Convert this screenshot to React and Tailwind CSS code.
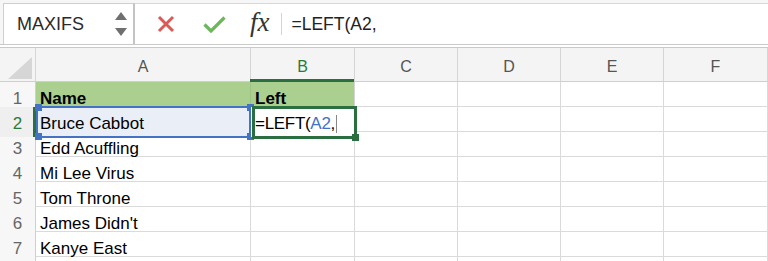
import React from 'react'

const cols = ['A', 'B', 'C', 'D', 'E', 'F']
const names = ['Edd Acuffling', 'Mi Lee Virus', 'Tom Throne', "James Didn't", 'Kanye East']

function Corner({ className }) {
  return <span className={`absolute w-[7px] h-[7px] ${className}`} />
}

export default function App() {
  const gridCols = 'grid grid-cols-[36px_215px_104px_103px_103px_103px_104px]'

  return (
    <div className="w-[768px] h-[261px] overflow-hidden bg-white text-[#222]" style={{ fontFamily: '"Liberation Sans", Arial, sans-serif' }}>
      {/* formula bar */}
      <div className="flex h-[44px] bg-[#f6f6f6] pt-[3px] pl-[3px]">
        <div className="flex items-center w-[132px] h-[41px] bg-white border-t border-l border-[#cfcfcf] border-r-2 border-r-[#c4c4c4]">
          <span className="ml-[13px] text-[18px] text-[#2a2a2a]">MAXIFS</span>
          <div className="ml-auto mr-[6px] flex flex-col gap-[8px]">
            <svg width="12" height="8" viewBox="0 0 12 8"><path d="M6 0 L12 8 L0 8 Z" fill="#6f6f6f" /></svg>
            <svg width="12" height="8" viewBox="0 0 12 8"><path d="M0 0 L12 0 L6 8 Z" fill="#6f6f6f" /></svg>
          </div>
        </div>
        <div className="flex-1 flex items-center h-[41px] bg-white border-t border-[#d8d8d8]">
          <svg className="ml-[22px]" width="18" height="18" viewBox="0 0 18 18">
            <path d="M2 2 L16 16 M16 2 L2 16" stroke="#dc5a55" strokeWidth="3" strokeLinecap="butt" />
          </svg>
          <svg className="ml-[28px]" width="23" height="17" viewBox="0 0 23 17">
            <path d="M1.5 8.5 L8 15 L21.5 1.5" stroke="#6cb859" strokeWidth="3.2" fill="none" />
          </svg>
          <span className="ml-[24px] text-[27px] italic text-[#333] leading-none pb-[4px]" style={{ fontFamily: '"Liberation Serif", "Times New Roman", serif' }}>fx</span>
          <span className="ml-[11px] w-px h-[22px] bg-[#d4d4d4]" />
          <span className="ml-[10px] text-[17.5px] text-[#222]">=LEFT(A2,</span>
        </div>
      </div>
      <div className="h-[4px] border-t border-b border-[#c9c9c9] bg-white" />

      {/* header row */}
      <div className={`${gridCols} h-[34px] bg-[#f4f4f4] border-b border-[#cfcfcf]`}>
        <div className="relative border-r border-[#d5d5d5]">
          <svg className="absolute left-[8px] top-[9px]" width="24" height="22" viewBox="0 0 24 22">
            <path d="M24 0 L24 22 L0 22 Z" fill="#d6d6d6" />
          </svg>
        </div>
        {cols.map((c) => (
          <div
            key={c}
            className={`relative flex items-center justify-center pt-[4px] text-[16px] border-r border-[#d5d5d5] ${c === 'B' ? 'text-[#2b7a3d]' : 'text-[#555]'}`}
          >
            {c}
            {c === 'B' && <span className="absolute left-[-1px] right-0 bottom-[-1px] h-[3px] bg-[#2b6e3f]" />}
          </div>
        ))}
      </div>

      {/* row 1 */}
      <div className={`${gridCols} h-[25px] border-b border-[#dadada] text-[17px]`}>
        <div className="flex items-center justify-center pt-[3px] bg-[#f7f7f7] border-r border-[#d0d0d0] text-[17px] text-[#666]">1</div>
        <div className="flex items-center pt-[4px] pl-[4px] bg-[#abcf8f] border-r border-[#9fc385] font-bold text-black">Name</div>
        <div className="flex items-center pt-[4px] pl-[4px] bg-[#abcf8f] border-r border-[#d5d5d5] font-bold text-black">Left</div>
        <div className="border-r border-[#dadada]" />
        <div className="border-r border-[#dadada]" />
        <div className="border-r border-[#dadada]" />
        <div className="border-r border-[#dadada]" />
      </div>

      {/* row 2 */}
      <div className={`${gridCols} h-[25px] border-b border-[#dadada] text-[17px]`}>
        <div className="relative flex items-center justify-center pt-[3px] bg-[#efefef] border-r border-[#d0d0d0] text-[17px] text-[#2b7a3d]">
          2
          <span className="absolute right-[-1px] top-0 bottom-0 w-[3px] bg-[#2b6e3f]" />
        </div>
        <div className="relative flex items-center pt-[4px] pl-[4px] bg-[#e9eef7] border-r border-[#dadada] text-black">
          <span className="absolute left-0 right-[-1px] top-[-1px] bottom-[-1px] border-2 border-[#4472c4] pointer-events-none" />
          <Corner className="left-[-1px] top-[-3px] bg-[#4472c4]" />
          <Corner className="left-[-1px] bottom-[-3px] bg-[#4472c4]" />
          <Corner className="right-[-4px] top-[-3px] bg-[#4472c4]" />
          <Corner className="right-[-4px] bottom-[-3px] bg-[#4472c4]" />
          <span className="relative">Bruce Cabbot</span>
        </div>
        <div className="relative flex items-center pt-[4px] pl-[4px] bg-white text-black">
          <span className="absolute left-[1px] right-[-2px] top-[-1px] bottom-[-2px] border-[3px] border-[#2b6e3f] pointer-events-none" />
          <Corner className="right-[-4px] bottom-[-4px] bg-[#2b6e3f]" />
          <span className="relative tracking-[-0.3px]">=LEFT(<span className="text-[#4472c4]">A2</span>,</span>
          <span className="relative ml-[1px] w-px h-[18px] bg-[#888]" />
        </div>
        <div className="border-r border-[#dadada]" />
        <div className="border-r border-[#dadada]" />
        <div className="border-r border-[#dadada]" />
        <div className="border-r border-[#dadada]" />
      </div>

      {names.map((n, i) => (
        <div key={n} className={`${gridCols} h-[25px] border-b border-[#dadada] text-[17px]`}>
          <div className="flex items-center justify-center pt-[3px] bg-[#f7f7f7] border-r border-[#d0d0d0] text-[17px] text-[#666]">{i + 3}</div>
          <div className="flex items-center pt-[4px] pl-[4px] border-r border-[#dadada] text-black">{n}</div>
          <div className="border-r border-[#dadada]" />
          <div className="border-r border-[#dadada]" />
          <div className="border-r border-[#dadada]" />
          <div className="border-r border-[#dadada]" />
          <div className="border-r border-[#dadada]" />
        </div>
      ))}
    </div>
  )
}
